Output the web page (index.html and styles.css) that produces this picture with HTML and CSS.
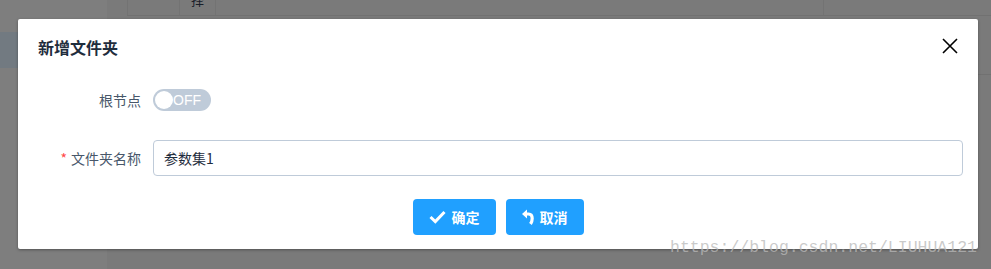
FILE: index.html
```html
<!DOCTYPE html>
<html lang="zh-CN">
<head>
<meta charset="utf-8">
<title>新增文件夹</title>
<link rel="stylesheet" href="styles.css">
</head>
<body>
<div class="page">
  <div class="bg">
    <aside class="bg-side"><div class="bg-side-item"></div></aside>
    <main class="bg-main">
      <div class="bg-head">
        <div class="bg-cell bg-cell-1"></div>
        <div class="bg-cell bg-cell-2"><span class="bg-text">择</span></div>
        <div class="bg-cell bg-cell-3"></div>
        <div class="bg-cell bg-cell-4"></div>
      </div>
      <div class="bg-row"></div>
    </main>
  </div>

  <div class="modal">
    <div class="modal-header">
      <span class="modal-title">新增文件夹</span>
      <button class="modal-close" aria-label="关闭">
        <svg width="16" height="16" viewBox="0 0 16 16"><path d="M1 1L15 15M15 1L1 15" stroke="#000" stroke-width="1.6" fill="none"/></svg>
      </button>
    </div>
    <div class="modal-body">
      <div class="form-item">
        <label class="form-label">根节点</label>
        <div class="form-control">
          <span class="switch"><span class="switch-knob"></span><span class="switch-text">OFF</span></span>
        </div>
      </div>
      <div class="form-item">
        <label class="form-label"><span class="req">*</span>文件夹名称</label>
        <div class="form-control">
          <input class="input" type="text" value="参数集1">
        </div>
      </div>
    </div>
    <div class="modal-footer">
      <button class="btn btn-ok">
        <svg class="ico-check" width="17" height="14" viewBox="0 0 17 14"><path d="M1.5 7L6.3 11.6L15.5 2" stroke="#fff" stroke-width="3" fill="none"/></svg>
        <span>确定</span>
      </button>
      <button class="btn btn-cancel">
        <svg class="ico-back" width="12" height="16" viewBox="0 0 12 16"><path d="M0 5L5 0.5V9.5Z" fill="#fff"/><path d="M4.5 5H6.5Q10.2 5 10.2 9.5Q10.2 12.5 8.5 15" stroke="#fff" stroke-width="3.2" fill="none"/></svg>
        <span>取消</span>
      </button>
    </div>
  </div>

  <div class="watermark">https://blog.csdn.net/LIUHUA121</div>
</div>
</body>
</html>
```

FILE: styles.css
```css
* { box-sizing: border-box; }
html, body { margin: 0; padding: 0; }
body { background: #7a7a7a; }

.page {
  position: relative;
  width: 991px;
  height: 269px;
  overflow: hidden;
  background: #7a7a7a;
  font-family: "Noto Sans CJK SC", "Liberation Sans", sans-serif;
}

/* background page (dimmed) */
.bg { display: flex; height: 100%; }
.bg-side { width: 107px; background: #7e7e7e; padding-top: 32px; }
.bg-side-item { height: 36px; background: #727a81; }
.bg-main { flex: 1; }
.bg-head {
  display: flex;
  height: 16px;
  margin-left: 20px;
  border-bottom: 1px solid #717171;
}
.bg-cell { border-left: 1px solid #737373; height: 15px; overflow: hidden; }
.bg-cell-1 { width: 52px; }
.bg-cell-2 { width: 36px; text-align: center; }
.bg-cell-3 { width: 608px; }
.bg-cell-4 { flex: 1; }
.bg-text {
  display: block;
  font-size: 13px;
  line-height: 13px;
  margin-top: -7px;
  color: #1a1f2a;
}
.bg-row { height: 59px; border-bottom: 1px solid #717171; }

/* dialog */
.modal {
  position: absolute;
  left: 18px;
  top: 19px;
  width: 960px;
  height: 230px;
  background: #fff;
  border-radius: 2px;
  box-shadow: 0 1px 3px rgba(0, 0, 0, 0.35);
  display: flex;
  flex-direction: column;
}
.modal-header {
  display: flex;
  justify-content: space-between;
  align-items: flex-start;
  padding: 18px 20px 0 20px;
}
.modal-title {
  font-size: 16px;
  line-height: 20px;
  font-weight: 700;
  color: #1f2d3d;
}
.modal-close {
  border: 0;
  padding: 0;
  margin: 1px 0 0 0;
  background: none;
  width: 16px;
  height: 16px;
  display: block;
}
.modal-close svg { display: block; }

.modal-body {
  padding: 25px 15px 0 20px;
  display: flex;
  flex-direction: column;
  gap: 22px;
}
.form-item { display: flex; align-items: center; height: 36px; }
.form-label {
  width: 115px;
  padding-right: 12px;
  text-align: right;
  font-size: 14px;
  color: #48576a;
}
.req { color: #ff4949; margin-right: 4px; }
.form-control { flex: 1; display: flex; align-items: center; }

.switch {
  display: inline-flex;
  align-items: center;
  width: 58px;
  height: 22px;
  border-radius: 11px;
  background: #bfcbd9;
  padding: 0 2px;
}
.switch-knob {
  width: 18px;
  height: 18px;
  border-radius: 50%;
  background: #fff;
}
.switch-text {
  margin-left: 0;
  font-family: "Liberation Sans", Arial, sans-serif;
  font-size: 14px;
  color: #fff;
  line-height: 22px;
}

.input {
  width: 100%;
  height: 36px;
  border: 1px solid #bfcbd9;
  border-radius: 4px;
  padding: 0 10px;
  font-family: "Noto Sans CJK SC", "Liberation Sans", sans-serif;
  font-size: 14px;
  color: #1f2d3d;
  outline: none;
  background: #fff;
}

.modal-footer {
  display: flex;
  justify-content: center;
  gap: 10px;
  padding-top: 23px;
}
.btn {
  display: inline-flex;
  align-items: center;
  gap: 6px;
  height: 36px;
  padding: 0 16px;
  border: 0;
  border-radius: 4px;
  background: #20a0ff;
  color: #fff;
  font-family: "Noto Sans CJK SC", "Liberation Sans", sans-serif;
  font-size: 14px;
  font-weight: 700;
}
.btn svg { display: block; }

.watermark {
  position: absolute;
  left: 670px;
  top: 238px;
  font-family: "Liberation Mono", monospace;
  font-size: 16.5px;
  line-height: 20px;
  color: rgba(185, 185, 185, 0.75);
  white-space: nowrap;
}
```
